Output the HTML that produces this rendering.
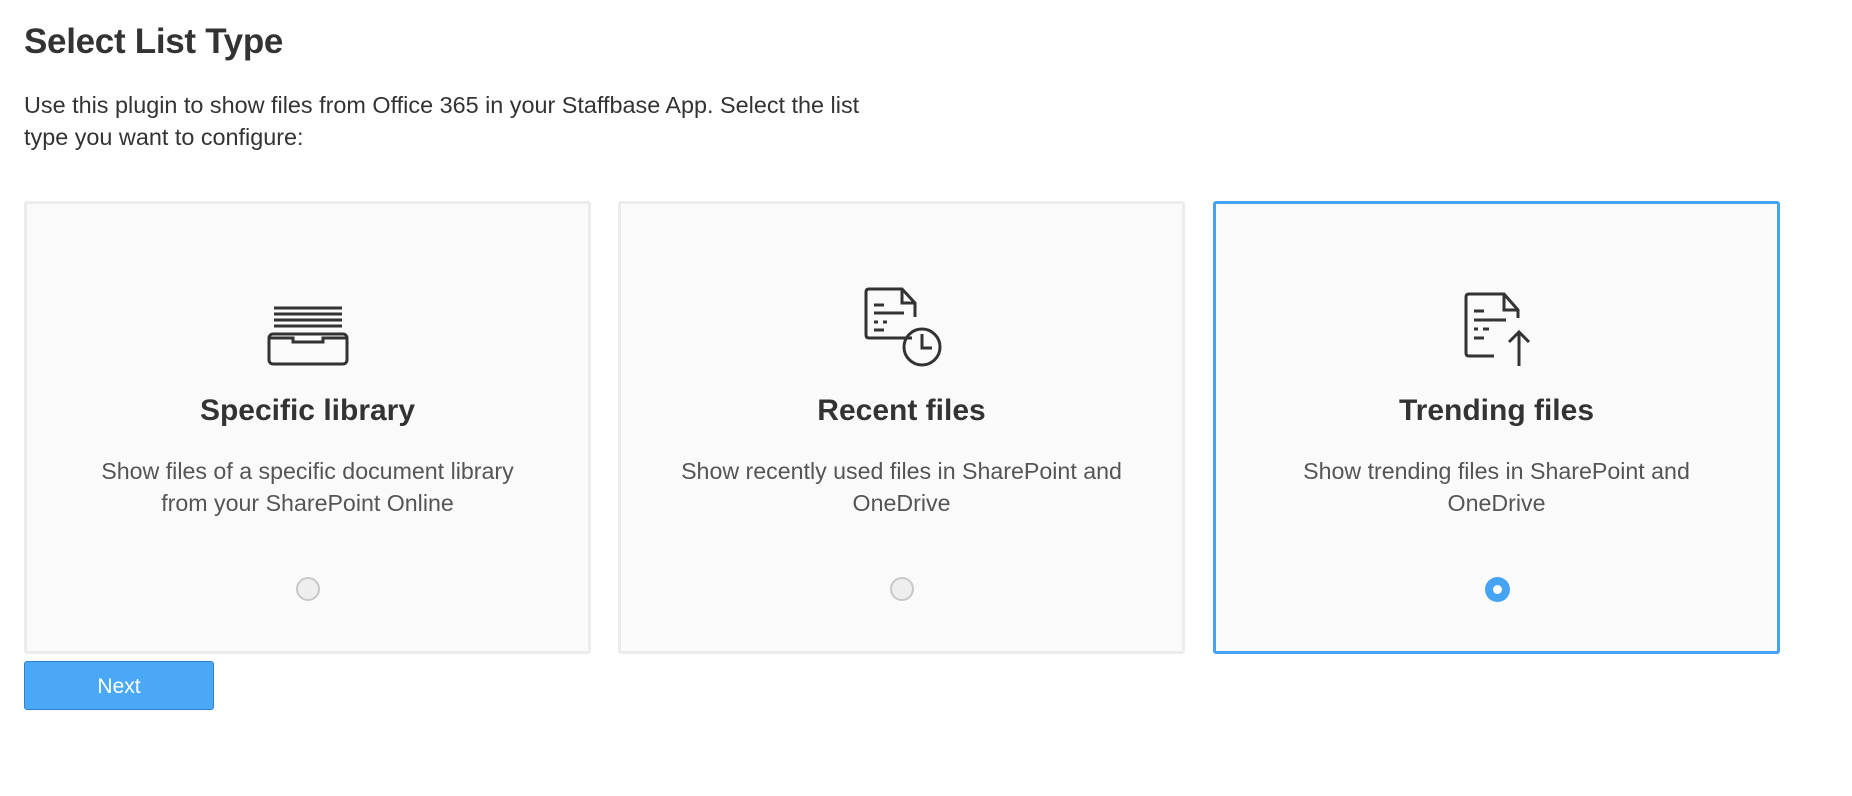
<!DOCTYPE html>
<html><head><meta charset="utf-8"><style>
body{margin:0;width:1852px;height:796px;background:#fff;font-family:"Liberation Sans",sans-serif;color:#333;position:relative;overflow:hidden}
h1{position:absolute;left:24px;top:22px;margin:0;font-size:35px;font-weight:bold;letter-spacing:-0.3px}
p.intro{position:absolute;left:24px;top:89px;margin:0;font-size:23.4px;line-height:32px;width:1000px}
.card{position:absolute;top:201px;width:561px;height:447px;background:#fafafa;border:3px solid #ececec;border-radius:3px;box-sizing:content-box;text-align:center}
.card.sel{border-color:#45a3f3}
.card svg{position:absolute;left:50%;transform:translateX(-50%)}
.card h2{position:absolute;left:0;right:0;top:190px;margin:0;font-size:30px;font-weight:bold;color:#333}
.card .d{position:absolute;left:0;right:0;top:251px;font-size:23.2px;line-height:32px;color:#555}
.radio{position:absolute;left:50%;top:373px;width:20px;height:20px;margin-left:-12px;border-radius:50%;border:2px solid #c8c8c8;background:#eee;box-sizing:content-box}
.radio.on{border:none;background:#45a3f3;width:25px;height:25px}
.radio.on::after{content:"";position:absolute;left:8px;top:8px;width:9px;height:9px;border-radius:50%;background:#fff}
.btn{position:absolute;left:24px;top:661px;width:190px;height:49px;background:#4aa8f7;border:1px solid #2e83cc;border-radius:3px;color:#fff;font-size:21px;line-height:49px;text-align:center;box-sizing:border-box}
</style></head><body>
<h1>Select List Type</h1>
<p class="intro">Use this plugin to show files from Office 365 in your Staffbase App. Select the list<br>type you want to configure:</p>

<div class="card" style="left:24px">
<svg style="top:101px" width="82" height="62" viewBox="0 0 82 62" fill="none" stroke="#333" stroke-width="3">
<path d="M7 3H75M7 9H75M7 15H75M7 21H75"/>
<rect x="2" y="29" width="78" height="30" rx="4"/>
<path d="M2 33H26V37H56V33H80"/>
</svg>
<h2>Specific library</h2>
<div class="d">Show files of a specific document library<br>from your SharePoint Online</div>
<div class="radio"></div>
</div>

<div class="card" style="left:618px">
<svg style="top:83px" width="80" height="80" viewBox="0 0 80 80" fill="none" stroke="#333" stroke-width="3">
<path d="M50 51H7Q4 51 4 48V5Q4 2 7 2H40L53 16V30"/>
<path d="M40 2V16H53"/>
<path d="M12 18H22M12 26H42M12 35H16M21 35H25M12 43H22"/>
<circle cx="60" cy="60" r="18"/>
<path d="M60 47V61H70"/>
</svg>
<h2>Recent files</h2>
<div class="d">Show recently used files in SharePoint and<br>OneDrive</div>
<div class="radio"></div>
</div>

<div class="card sel" style="left:1213px">
<svg style="top:88px" width="70" height="76" viewBox="0 0 70 76" fill="none" stroke="#333" stroke-width="3">
<path d="M32 64H7Q4 64 4 61V5Q4 2 7 2H42L56 18V26"/>
<path d="M42 2V18H56"/>
<path d="M12 19H22M12 28H44M12 37H16M21 37H27M12 46H22"/>
<path d="M57 74V40M47 50L57 40L67 50"/>
</svg>
<h2>Trending files</h2>
<div class="d">Show trending files in SharePoint and<br>OneDrive</div>
<div class="radio on"></div>
</div>

<div class="btn">Next</div>
</body></html>
